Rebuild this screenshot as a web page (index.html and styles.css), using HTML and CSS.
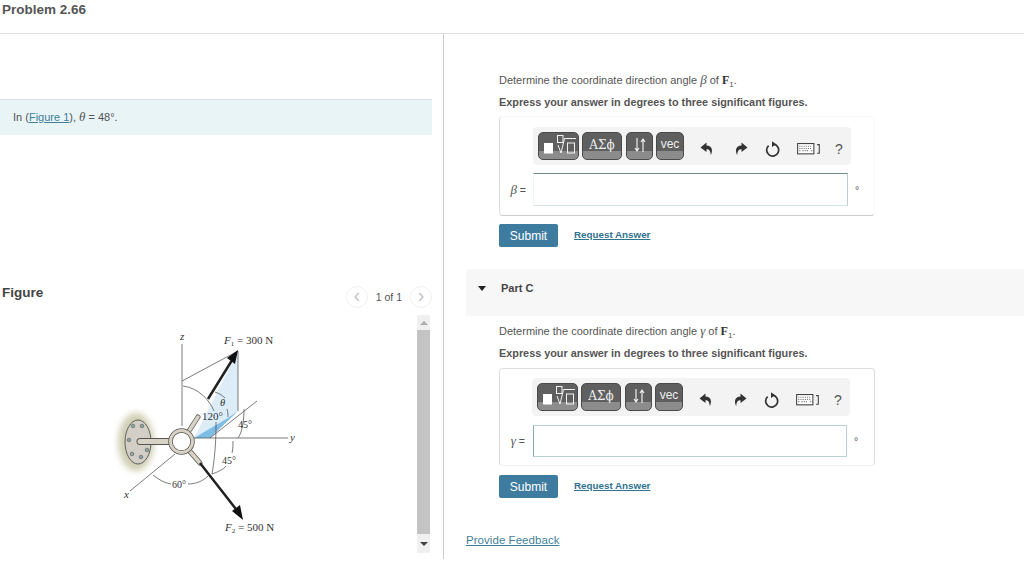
FILE: index.html
```html
<!DOCTYPE html>
<html lang="en">
<head>
<meta charset="utf-8">
<title>Problem 2.66</title>
<link rel="stylesheet" href="styles.css">
</head>
<body>
<svg class="defs" width="0" height="0" aria-hidden="true">
  <symbol id="i-tmpl" viewBox="0 0 41 28">
    <rect x="6" y="11" width="9" height="10.500" fill="#fff"/>
    <rect x="19.500" y="3.500" width="5.500" height="7" fill="none" stroke="#f2f2f2"/>
    <path d="M20 13l3 8 3.500-14.500H38" fill="none" stroke="#f2f2f2" stroke-width="1"/>
    <rect x="29.500" y="11" width="7" height="10" fill="none" stroke="#f2f2f2"/>
  </symbol>
  <symbol id="i-arrows" viewBox="0 0 14 16">
    <path d="M4 1v13M2 11l2 3 2-3M10 15V2M8 5l2-3 2 3" fill="none" stroke="#eee" stroke-width="1.200"/>
  </symbol>
  <symbol id="i-undo" viewBox="0 0 14 14">
    <path d="M6.500 .5 .5 5.500 6.500 10V7.200c2.500 0 4 1 4.300 6C13 9 12.500 3.500 6.500 3.500z" fill="#333"/>
  </symbol>
  <symbol id="i-redo" viewBox="0 0 14 14">
    <path d="M7.500 .5 13.500 5.500 7.500 10V7.200c-2.500 0-4 1-4.300 6C1 9 1.500 3.500 7.500 3.500z" fill="#333"/>
  </symbol>
  <symbol id="i-reset" viewBox="0 0 16 16">
    <path d="M9 3.200A6 6 0 1 1 3.600 4.600" fill="none" stroke="#333" stroke-width="1.700"/>
    <path d="M7 .2 11.200 3.200 7 6z" fill="#333"/>
  </symbol>
  <symbol id="i-keys" viewBox="0 0 22 12">
    <rect x=".5" y=".5" width="15" height="9.500" fill="#fff" stroke="#444"/>
    <path d="M2 3h12M2 5h12M2 7h1M5 7h6M13 7h1" stroke="#777" stroke-dasharray="1 1"/>
    <path d="M18.500 1.500h2v8h-2" fill="none" stroke="#444"/>
  </symbol>
</svg>

<header class="topbar"><h1 class="title">Problem 2.66</h1></header>

<main class="layout">
  <section class="left">
    <p class="info">In (<a href="#" class="link">Figure 1</a>), <i class="math">θ</i> = 48°.</p>
    <div class="figure-head">
      <h2 class="figure-title">Figure</h2>
      <div class="pager">
        <span class="page-btn">‹</span>
        <span class="page-count">1 of 1</span>
        <span class="page-btn">›</span>
      </div>
    </div>
    <div class="viewer">
      <svg class="diagram" viewBox="0 314 417 238" width="417" height="238">
        <defs><filter id="blur"><feGaussianBlur stdDeviation="3"/></filter></defs>
        <ellipse cx="136" cy="441" rx="18" ry="29" fill="#cfcfb4" filter="url(#blur)"/>
        <ellipse cx="138" cy="441" rx="13" ry="22" fill="#d3cfc6" stroke="#444" stroke-width=".8"/>
        <g fill="#8aa" stroke="#444" stroke-width=".5">
          <circle cx="133" cy="425" r="1.800"/><circle cx="142" cy="425" r="1.800"/>
          <circle cx="129" cy="439" r="1.800"/><circle cx="132" cy="453" r="1.800"/>
          <circle cx="141" cy="456" r="1.800"/><circle cx="147" cy="449" r="1.800"/>
        </g>
        <path d="M194 437 238 350V410L210 437z" fill="#dcedf8"/>
        <path d="M194 437 228 417 238 410 210 437z" fill="#7dbde6"/>
        <g fill="none" stroke="#444" stroke-width=".7">
          <path d="M182 343V425M182 380 238 350V410M194 437H288M210 437 257 400M175 453 130 490"/>
          <path d="M183 385C198 387 209 398 214 410M216 421C216 430 216 450 212 473"/>
          <path d="M153 474C158 478 164 482 171 483M188 483C196 483 203 480 208 475"/>
          <path d="M212 473C218 471 224 468 226 465M232 452C233 448 233 444 233 440M238 437C242 432 244 420 244 408"/>
          <path d="M215 391C218 392 222 394 225 397M227 408C228 412 228 414 228 416"/>
        </g>
        <path d="M140 440.500H170" stroke="#555" stroke-width="7" stroke-linecap="round"/>
        <path d="M140 440.500H170" stroke="#d8d2c4" stroke-width="5" stroke-linecap="round"/>
        <path d="M187 433 198 416M187 447 200 462" stroke="#555" stroke-width="5" stroke-linecap="round"/>
        <path d="M187 433 198 416M187 447 200 462" stroke="#d8d2c4" stroke-width="3.500" stroke-linecap="round"/>
        <circle cx="181.500" cy="440.500" r="11" fill="#fff" stroke="#555" stroke-width="4.500"/>
        <circle cx="181.500" cy="440.500" r="11" fill="none" stroke="#d8d2c4" stroke-width="3"/>
        <path d="M208 398 234 356M200 462 239 512" stroke="#222" stroke-width="2.500"/>
        <path d="M238 349 227 357 235 363zM243 519 232 510 240 504z" fill="#111"/>
        <g class="fig-text">
          <text x="224" y="343"><tspan font-style="italic">F</tspan><tspan font-size="7" dy="2">1</tspan><tspan dy="-2"> = 300 N</tspan></text>
          <text x="225" y="530"><tspan font-style="italic">F</tspan><tspan font-size="7" dy="2">2</tspan><tspan dy="-2"> = 500 N</tspan></text>
          <text x="202" y="419">120°</text>
          <text x="220" y="405" font-style="italic" font-size="10.500">θ</text>
          <text x="238" y="427" font-size="10">45°</text>
          <text x="222" y="463" font-size="10">45°</text>
          <text x="172" y="487" font-size="10">60°</text>
          <text x="180" y="339" font-style="italic">z</text>
          <text x="290" y="440" font-style="italic">y</text>
          <text x="124" y="497" font-style="italic">x</text>
        </g>
      </svg>
      <div class="scrollbar">
        <span class="arrow-up"></span>
        <span class="thumb"></span>
        <span class="arrow-down"></span>
      </div>
    </div>
  </section>

  <section class="right">
    <div class="part part-b">
      <p class="prompt">Determine the coordinate direction angle <i class="math">β</i> of <b class="vec">F</b><sub class="sub">1</sub>.</p>
      <p class="instruction">Express your answer in degrees to three significant figures.</p>
      <div class="answer-box box-b">
        <div class="toolbar">
          <span class="tool t1"><svg width="41" height="28"><use href="#i-tmpl"/></svg></span>
          <span class="tool t2">ΑΣϕ</span>
          <span class="tool t3"><svg width="14" height="16"><use href="#i-arrows"/></svg></span>
          <span class="tool t4">vec</span>
          <span class="actions">
            <svg class="act" width="14" height="14"><use href="#i-undo"/></svg>
            <svg class="act" width="14" height="14"><use href="#i-redo"/></svg>
            <svg class="act" width="16" height="16"><use href="#i-reset"/></svg>
            <svg class="act-keys" width="24" height="13" viewBox="0 0 22 12"><use href="#i-keys"/></svg>
            <span class="help">?</span>
          </span>
        </div>
        <div class="answer-row">
          <label class="var"><i class="math">β</i> =</label>
          <span class="input"></span>
          <span class="unit">°</span>
        </div>
      </div>
      <div class="buttons">
        <span class="submit">Submit</span>
        <a href="#" class="request">Request Answer</a>
      </div>
    </div>

    <div class="part-bar"><span class="caret"></span><h3 class="part-name">Part C</h3></div>

    <div class="part part-c">
      <p class="prompt">Determine the coordinate direction angle <i class="math">γ</i> of <b class="vec">F</b><sub class="sub">1</sub>.</p>
      <p class="instruction">Express your answer in degrees to three significant figures.</p>
      <div class="answer-box box-c">
        <div class="toolbar">
          <span class="tool t1"><svg width="41" height="28"><use href="#i-tmpl"/></svg></span>
          <span class="tool t2">ΑΣϕ</span>
          <span class="tool t3"><svg width="14" height="16"><use href="#i-arrows"/></svg></span>
          <span class="tool t4">vec</span>
          <span class="actions">
            <svg class="act" width="14" height="14"><use href="#i-undo"/></svg>
            <svg class="act" width="14" height="14"><use href="#i-redo"/></svg>
            <svg class="act" width="16" height="16"><use href="#i-reset"/></svg>
            <svg class="act-keys" width="24" height="13" viewBox="0 0 22 12"><use href="#i-keys"/></svg>
            <span class="help">?</span>
          </span>
        </div>
        <div class="answer-row">
          <label class="var"><i class="math">γ</i> =</label>
          <span class="input"></span>
          <span class="unit">°</span>
        </div>
      </div>
      <div class="buttons">
        <span class="submit">Submit</span>
        <a href="#" class="request">Request Answer</a>
      </div>
    </div>

    <a href="#" class="feedback">Provide Feedback</a>
  </section>
</main>
</body>
</html>
```
FILE: styles.css
```css
* { box-sizing: border-box; }
html, body { margin: 0; padding: 0; background: #fff; }
body { font-family: "Liberation Sans", Arial, sans-serif; color: #444; overflow: hidden; height: 571px; }
.defs { position: absolute; }
p, h1, h2, h3 { margin: 0; }
a { color: #2f7390; }

.topbar { height: 34px; border-bottom: 1px solid #e2e2e2; padding: 2px 2px 0; }
.title { font-size: 13.500px; line-height: 16px; font-weight: bold; color: #555; }

.layout { display: flex; height: 525px; }
.left { width: 444px; border-right: 1px solid #ccc; padding-top: 65px; flex: none; }
.right { flex: 1; padding-top: 38px; min-width: 0; }

.info { width: 432px; height: 36px; background: #e8f4f6; border-top: 1px solid #dde; padding: 10px 13px 0; font-size: 11px; line-height: 14px; color: #555; }
.link { color: #3f7f9a; }
.math { font-family: "Liberation Serif", serif; font-style: italic; font-size: 13px; }

.figure-head { display: flex; justify-content: space-between; align-items: flex-start; margin-top: 147px; height: 24px; padding: 0 11px 0 2px; }
.figure-title { font-size: 13.500px; line-height: 16px; margin-top: 3px; font-weight: bold; color: #444; }
.pager { display: flex; align-items: center; gap: 8px; margin-top: 4px; }
.page-btn { width: 22px; height: 22px; border: 1px solid #f0f0f0; border-radius: 50%; color: #c4c4c4; font-size: 20px; line-height: 16px; text-align: center; }
.page-count { font-size: 10.500px; color: #555; }

.viewer { display: flex; height: 238px; margin-top: 9px; }
.diagram { display: block; flex: none; }
.fig-text { font-family: "Liberation Serif", serif; font-size: 11px; fill: #333; }

.scrollbar { width: 13px; display: flex; flex-direction: column; background: #f0f0f0; }
.thumb { flex: 1; background: #c4c4c4; }
.arrow-up, .arrow-down { height: 15px; display: flex; justify-content: center; align-items: center; }
.arrow-down { height: 19px; }
.arrow-up::before { content: ""; border: 4px solid transparent; border-top: 0; border-bottom: 4px solid #aaa; }
.arrow-down::before { content: ""; border: 4px solid transparent; border-bottom: 0; border-top: 4px solid #444; }

.part { padding-left: 55px; }
.prompt { font-size: 11px; line-height: 16px; color: #555; }
.vec { font-family: "Liberation Serif", serif; font-size: 12px; color: #333; }
.sub { font-size: 8px; line-height: 0; }
.instruction { font-size: 10.850px; line-height: 16px; font-weight: bold; color: #555; margin-top: 6px; }

.answer-box { width: 376px; margin-top: 6px; border-radius: 4px; padding-left: 33px; }
.box-b { height: 100px; padding-top: 10px; border: 1px solid #ddd; border-top-color: #f8f8f8; border-right-color: #f8f8f8; border-bottom-color: #ccc; }
.box-c { height: 98px; padding-top: 9px; border: 1px solid #ddd; border-bottom-color: #f2f2f2; padding-left: 32px; margin-top: 7px; }

.toolbar { display: flex; align-items: flex-start; gap: 3px; width: 318px; height: 38px; background: #f3f3f3; border-radius: 4px; padding: 5px 0 0 5px; }
.tool { display: flex; align-items: center; justify-content: center; height: 28px; border: 1px solid #4a4a4a; border-radius: 5px; color: #eee; background: linear-gradient(#5f5f5f 0, #5f5f5f 70%, #8c8c8c 70%, #8c8c8c 100%); }
.t1 { width: 41px; }
.t2 { width: 40px; margin-right: 1px; font-family: "DejaVu Serif", "Liberation Serif", serif; font-size: 12px; padding-bottom: 3px; }
.t3 { width: 27px; padding-bottom: 2px; }
.t4 { width: 28px; font-size: 12px; padding-bottom: 4px; }
.tool svg { display: block; flex: none; }
.actions { display: flex; align-items: center; height: 28px; margin: 3px 0 0 13px; }
.act { display: block; flex: none; }
.act:nth-child(2) { margin-left: 20px; }
.act:nth-child(3) { margin-left: 17px; }
.act-keys { margin-left: 16px; display: block; }
.help { margin-left: 14px; font-size: 14px; color: #555; }

.answer-row { display: flex; align-items: center; margin-top: 8px; position: relative; }
.box-c .answer-row { margin-top: 9px; padding-left: 1px; }
.var { position: absolute; right: 100%; margin-right: 7px; font-size: 10.500px; color: #555; white-space: nowrap; }
.input { display: block; width: 315px; height: 33px; border: 1px solid #d4e6e6; border-left-color: #eef5f5; border-right-color: #b9d0d0; border-top-color: #6f8a8a; background: #fff; }
.box-c .input { width: 314px; height: 32px; border-color: #b9d0d0; border-left-color: #8aa; }
.unit { margin-left: 7px; font-size: 10.500px; color: #555; }

.buttons { display: flex; align-items: flex-start; margin-top: 8px; gap: 16px; }
.part-c .buttons { margin-top: 9px; }
.submit { width: 59px; height: 23px; background: #3e7c9f; color: #fff; border-radius: 2px; font-size: 12px; line-height: 24px; text-align: center; }
.request { font-size: 9.800px; line-height: 12px; margin-top: 5px; font-weight: bold; color: #2f7390; }

.part-bar { display: flex; align-items: flex-start; margin: 22px 0 7px 22px; height: 47px; background: #f7f7f7; padding: 12px 0 0 12px; }
.caret { border: 4.500px solid transparent; border-bottom: 0; border-top: 5px solid #222; margin-top: 5px; }
.part-name { font-size: 11px; line-height: 14px; font-weight: bold; color: #444; margin-left: 15px; }

.feedback { display: inline-block; margin: 36px 0 0 22px; font-size: 11.500px; letter-spacing: .05px; color: #3f7f9a; }
```
